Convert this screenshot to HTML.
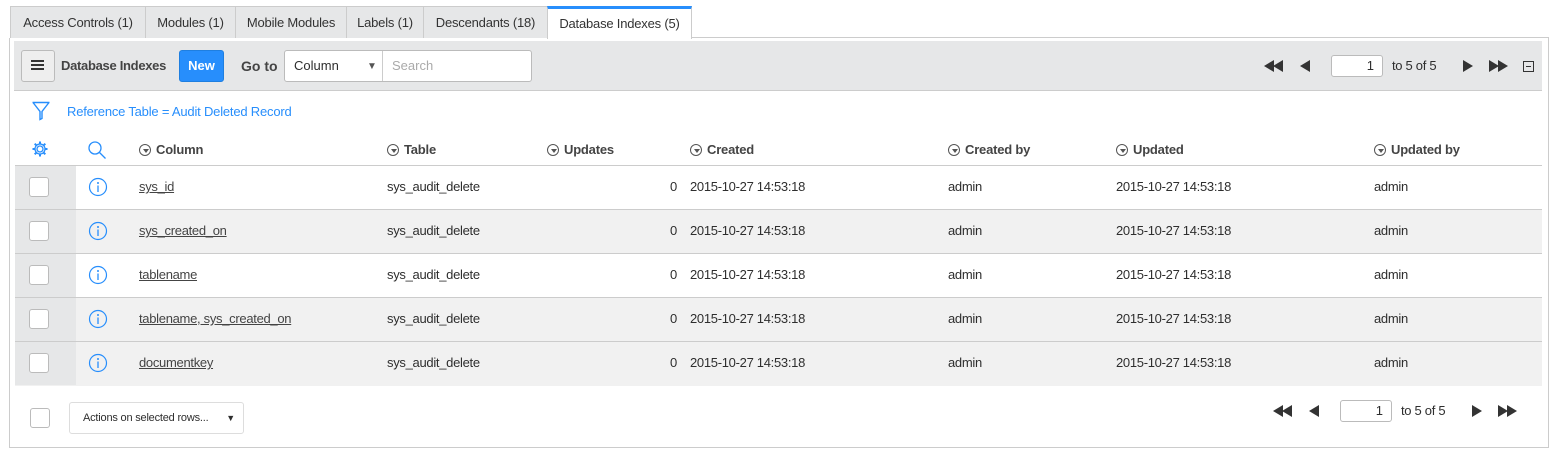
<!DOCTYPE html>
<html><head><style>
*{box-sizing:border-box;margin:0;padding:0}
body{width:1560px;height:464px;background:#fff;font-family:"Liberation Sans",Arial,sans-serif;font-size:13px;color:#2e2e2e;position:relative;overflow:hidden}
.a{position:absolute}
.tab{position:absolute;top:6px;height:32px;background:#e6e7e8;border:1px solid #ccc;border-bottom:none;line-height:32px;text-align:center;font-size:13px;color:#333;letter-spacing:-0.2px}
.cb{position:absolute;width:20px;height:20px;border:1px solid #bbb;border-radius:3px;background:#fff}
.row{position:absolute;left:15px;width:1527px;height:44px;border-bottom:1px solid #ccc}
.hd{position:absolute;top:142px;font-weight:bold;font-size:13px;color:#444;letter-spacing:-0.2px}
.dd{display:inline-block;width:12px;height:12px;border:1px solid #555;border-radius:50%;vertical-align:-2px;margin-right:5px;position:relative}
.dd:after{content:"";position:absolute;left:2.5px;top:3.5px;border-left:3px solid transparent;border-right:3px solid transparent;border-top:4px solid #555}
u{text-decoration:underline;color:#444}
.l{position:absolute;width:0;height:0;border-top:6px solid transparent;border-bottom:6px solid transparent;border-right:10px solid #333}
.r{position:absolute;width:0;height:0;border-top:6px solid transparent;border-bottom:6px solid transparent;border-left:10px solid #333}
</style></head><body>
<div class="tab" style="left:10px;width:136px">Access Controls (1)</div>
<div class="tab" style="left:145px;width:91px">Modules (1)</div>
<div class="tab" style="left:235px;width:112px">Mobile Modules</div>
<div class="tab" style="left:346px;width:78px">Labels (1)</div>
<div class="tab" style="left:423px;width:125px">Descendants (18)</div>
<div class="tab" style="left:547px;width:145px;background:#fff;border-top:3px solid #278efc;line-height:30px;height:33px">Database Indexes (5)</div>
<div class="a" style="left:9px;top:38px;width:1540px;height:410px;border:1px solid #ccc;border-top:none"></div>
<div class="a" style="left:692px;top:37px;width:857px;border-top:1px solid #ccc"></div>
<div class="a" style="left:14px;top:41px;width:1528px;height:50px;background:#e6e7e8;border-bottom:1px solid #ccc"></div>
<div class="a" style="left:21px;top:50px;width:34px;height:32px;border:1px solid #bbb;border-radius:3px;background:#eee"></div>
<div class="a" style="left:31px;top:60px;width:13px;height:2px;background:#333;box-shadow:0 4px 0 #333,0 8px 0 #333"></div>
<div class="a" style="left:61px;top:58px;font-weight:bold;color:#444;letter-spacing:-0.3px">Database Indexes</div>
<div class="a" style="left:179px;top:50px;width:45px;height:32px;background:#278efc;border:1px solid #1f7fe0;border-radius:3px;color:#fff;text-align:center;line-height:30px;font-weight:bold">New</div>
<div class="a" style="left:241px;top:58px;font-weight:bold;color:#444;font-size:14px">Go to</div>
<div class="a" style="left:284px;top:50px;width:248px;height:32px;background:#fff;border:1px solid #bbb;border-radius:3px"></div>
<div class="a" style="left:382px;top:51px;width:1px;height:30px;background:#ccc"></div>
<div class="a" style="left:294px;top:58px">Column</div>
<div class="a" style="left:367px;top:61px;font-size:10px;color:#555">▼</div>
<div class="a" style="left:392px;top:58px;color:#aaa">Search</div>
<div class="l" style="left:1264px;top:60px"></div><div class="l" style="left:1273px;top:60px"></div>
<div class="l" style="left:1300px;top:60px"></div>
<div class="a" style="left:1331px;top:55px;width:52px;height:22px;background:#fff;border:1px solid #bbb;border-radius:3px;text-align:right;padding-right:8px;line-height:20px">1</div>
<div class="a" style="left:1392px;top:58px;letter-spacing:-0.3px">to 5 of 5</div>
<div class="r" style="left:1463px;top:60px"></div>
<div class="r" style="left:1489px;top:60px"></div><div class="r" style="left:1498px;top:60px"></div>
<div class="a" style="left:1523px;top:61px;width:11px;height:11px;border:1px solid #333"><div style="margin:4px 2px;height:1px;background:#333"></div></div>
<svg class="a" style="left:31px;top:101px" width="20" height="22" viewBox="0 0 20 22"><path d="M1.5 1.5h17M2 1.5l7 9v8l2-1v-7l7-9" fill="none" stroke="#278efc" stroke-width="1.4"/></svg>
<div class="a" style="left:67px;top:104px;color:#278efc;letter-spacing:-0.2px">Reference Table = Audit Deleted Record</div>
<svg class="a" style="left:31px;top:140px" width="18" height="18" viewBox="0 0 18 18"><circle cx="9" cy="9" r="3" fill="none" stroke="#278efc" stroke-width="1.3"/><path d="M9 1.5v3M9 13.5v3M1.5 9h3M13.5 9h3M3.7 3.7l2 2M12.3 12.3l2 2M3.7 14.3l2-2M12.3 5.7l2-2" stroke="#278efc" stroke-width="2"/><circle cx="9" cy="9" r="5" fill="none" stroke="#278efc" stroke-width="1.3"/></svg>
<svg class="a" style="left:87px;top:140px" width="20" height="20" viewBox="0 0 20 20"><circle cx="8" cy="8" r="6" fill="none" stroke="#278efc" stroke-width="1.3"/><path d="M12.5 12.5l6 6" stroke="#278efc" stroke-width="1.3"/></svg>
<div class="hd" style="left:139px"><i class="dd"></i>Column</div>
<div class="hd" style="left:387px"><i class="dd"></i>Table</div>
<div class="hd" style="left:547px"><i class="dd"></i>Updates</div>
<div class="hd" style="left:690px"><i class="dd"></i>Created</div>
<div class="hd" style="left:948px"><i class="dd"></i>Created by</div>
<div class="hd" style="left:1116px"><i class="dd"></i>Updated</div>
<div class="hd" style="left:1374px"><i class="dd"></i>Updated by</div>
<div class="a" style="left:15px;top:165px;width:1527px;border-top:1px solid #ccc"></div>

<div class="row" style="top:166px;background:#fff"></div>
<div class="row" style="top:210px;background:#f1f1f1"></div>
<div class="row" style="top:254px;background:#fff"></div>
<div class="row" style="top:298px;background:#f1f1f1"></div>
<div class="row" style="top:342px;background:#f1f1f1;border-bottom:none"></div>
<div class="a" style="left:15px;top:166px;width:61px;height:219px;background:#e6e7e8"></div>
<div class="a" style="left:15px;top:209px;width:61px;border-top:1px solid #ccc"></div>
<div class="a" style="left:15px;top:253px;width:61px;border-top:1px solid #ccc"></div>
<div class="a" style="left:15px;top:297px;width:61px;border-top:1px solid #ccc"></div>
<div class="a" style="left:15px;top:341px;width:61px;border-top:1px solid #ccc"></div>

<div id="rows" style="letter-spacing:-0.3px"></div>
<script>
var n=["sys_id","sys_created_on","tablename","tablename, sys_created_on","documentkey"],h="";
n.forEach(function(c,i){var t=166+i*44;
h+='<div class="cb" style="left:29px;top:'+(t+11)+'px"></div>'+
'<svg class="a" style="left:88px;top:'+(t+11)+'px" width="20" height="20" viewBox="0 0 20 20"><circle cx="10" cy="10" r="8.5" fill="none" stroke="#278efc" stroke-width="1.2"/><circle cx="10" cy="6" r="1" fill="#278efc"/><path d="M10 8.5v6.5" stroke="#278efc" stroke-width="1.3"/></svg>'+
'<div class="a" style="left:139px;top:'+(t+13)+'px"><u>'+c+'</u></div>'+
'<div class="a" style="left:387px;top:'+(t+13)+'px">sys_audit_delete</div>'+
'<div class="a" style="left:670px;top:'+(t+13)+'px">0</div>'+
'<div class="a" style="left:690px;top:'+(t+13)+'px">2015-10-27 14:53:18</div>'+
'<div class="a" style="left:948px;top:'+(t+13)+'px">admin</div>'+
'<div class="a" style="left:1116px;top:'+(t+13)+'px">2015-10-27 14:53:18</div>'+
'<div class="a" style="left:1374px;top:'+(t+13)+'px">admin</div>';});
document.getElementById("rows").innerHTML=h;
</script>

<div class="cb" style="left:30px;top:408px"></div>
<div class="a" style="left:69px;top:402px;width:175px;height:32px;border:1px solid #ddd;border-radius:3px;background:#fff;font-size:11px;line-height:30px;padding-left:13px;letter-spacing:-0.2px">Actions on selected rows...<span style="position:absolute;right:8px;font-size:9px">▼</span></div>
<div class="l" style="left:1273px;top:405px"></div><div class="l" style="left:1282px;top:405px"></div>
<div class="l" style="left:1309px;top:405px"></div>
<div class="a" style="left:1340px;top:400px;width:52px;height:22px;background:#fff;border:1px solid #bbb;border-radius:3px;text-align:right;padding-right:8px;line-height:20px">1</div>
<div class="a" style="left:1401px;top:403px;letter-spacing:-0.3px">to 5 of 5</div>
<div class="r" style="left:1472px;top:405px"></div>
<div class="r" style="left:1498px;top:405px"></div><div class="r" style="left:1507px;top:405px"></div>
</body></html>
